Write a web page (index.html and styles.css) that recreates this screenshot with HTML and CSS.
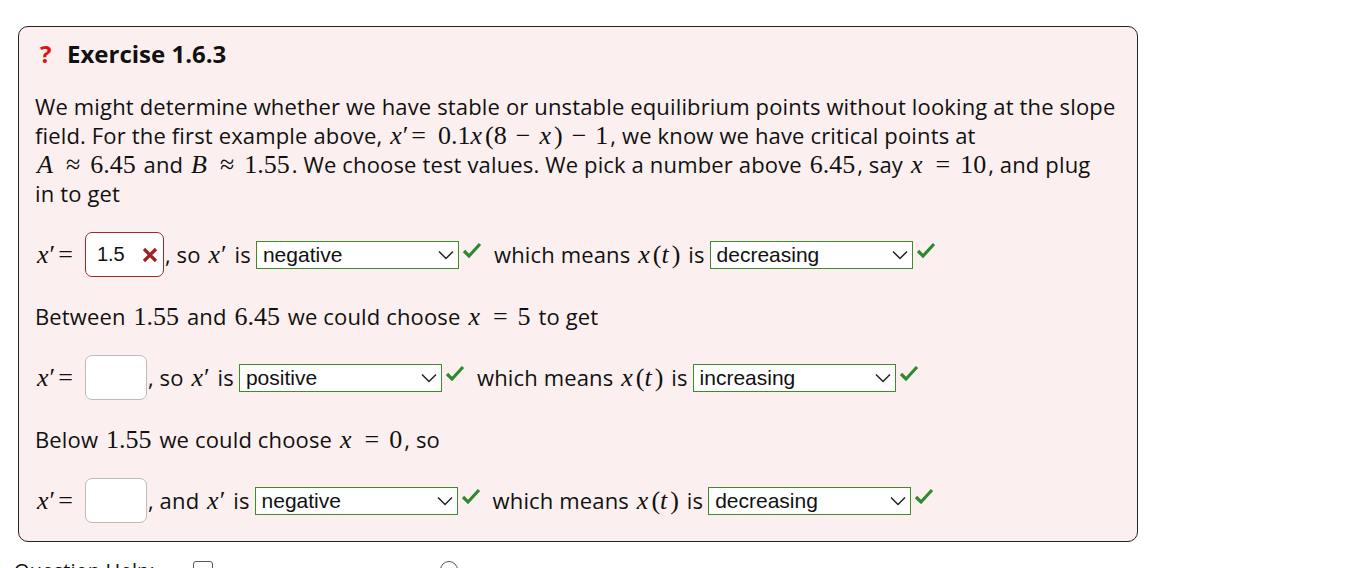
FILE: index.html
```html
<!DOCTYPE html>
<html>
<head>
<meta charset="utf-8">
<link rel="stylesheet" href="styles.css">
</head>
<body>
<div class="card">
  <div class="title"><span class="qmark">?</span><span class="ttl">Exercise 1.6.3</span></div>
  <p class="para">We might determine whether we have stable or unstable equilibrium points without looking at the slope<br>field. For the first example above, <span class="m"><i>x</i><span class="pr">′</span><span class="eq">=</span><span class="sp"></span>0.1<i>x</i>(8<span class="bin">−</span><i>x</i>)<span class="bin">−</span>1</span>, we know we have critical points at<br><span class="m"><i>A</i><span class="rel">≈</span>6.45</span> and <span class="m"><i>B</i><span class="rel">≈</span>1.55</span>. We choose test values. We pick a number above <span class="m">6.45</span>, say <span class="m"><i>x</i><span class="rel">=</span>10</span>, and plug<br>in to get</p>

  <div class="row">
    <span class="m lhs"><i>x</i><span class="pr">′</span><span class="eq">=</span></span>
    <span class="ans wrong">1.5<svg class="xmark" width="18" height="18" viewBox="0 0 18 18"><path d="M3 3 L15 15 M15 3 L3 15" stroke="#a32020" stroke-width="3.2"/></svg></span>
    <span class="txt">, so <span class="m"><i>x</i><span class="pr">′</span></span> is</span>
    <span class="sel">negative<svg class="chev" width="16" height="10" viewBox="0 0 16 10"><path d="M1 1.5 L8 8.5 L15 1.5" fill="none" stroke="#222" stroke-width="1.5"/></svg></span>
    <svg class="check" width="20" height="18" viewBox="0 0 20 18"><path d="M2 9 L7 14 L18 2" fill="none" stroke="#2f8a2f" stroke-width="3.2"/></svg>
    <span class="txt wm">which means <span class="m"><i>x</i>(<i>t</i>)</span> is</span>
    <span class="sel">decreasing<svg class="chev" width="16" height="10" viewBox="0 0 16 10"><path d="M1 1.5 L8 8.5 L15 1.5" fill="none" stroke="#222" stroke-width="1.5"/></svg></span>
    <svg class="check" width="20" height="18" viewBox="0 0 20 18"><path d="M2 9 L7 14 L18 2" fill="none" stroke="#2f8a2f" stroke-width="3.2"/></svg>
  </div>

  <p class="line">Between <span class="m">1.55</span> and <span class="m">6.45</span> we could choose <span class="m"><i>x</i><span class="rel">=</span>5</span> to get</p>

  <div class="row">
    <span class="m lhs"><i>x</i><span class="pr">′</span><span class="eq">=</span></span>
    <span class="ans empty"></span>
    <span class="txt">, so <span class="m"><i>x</i><span class="pr">′</span></span> is</span>
    <span class="sel">positive<svg class="chev" width="16" height="10" viewBox="0 0 16 10"><path d="M1 1.5 L8 8.5 L15 1.5" fill="none" stroke="#222" stroke-width="1.5"/></svg></span>
    <svg class="check" width="20" height="18" viewBox="0 0 20 18"><path d="M2 9 L7 14 L18 2" fill="none" stroke="#2f8a2f" stroke-width="3.2"/></svg>
    <span class="txt wm">which means <span class="m"><i>x</i>(<i>t</i>)</span> is</span>
    <span class="sel">increasing<svg class="chev" width="16" height="10" viewBox="0 0 16 10"><path d="M1 1.5 L8 8.5 L15 1.5" fill="none" stroke="#222" stroke-width="1.5"/></svg></span>
    <svg class="check" width="20" height="18" viewBox="0 0 20 18"><path d="M2 9 L7 14 L18 2" fill="none" stroke="#2f8a2f" stroke-width="3.2"/></svg>
  </div>

  <p class="line">Below <span class="m">1.55</span> we could choose <span class="m"><i>x</i><span class="rel">=</span>0</span>, so</p>

  <div class="row">
    <span class="m lhs"><i>x</i><span class="pr">′</span><span class="eq">=</span></span>
    <span class="ans empty"></span>
    <span class="txt">, and <span class="m"><i>x</i><span class="pr">′</span></span> is</span>
    <span class="sel">negative<svg class="chev" width="16" height="10" viewBox="0 0 16 10"><path d="M1 1.5 L8 8.5 L15 1.5" fill="none" stroke="#222" stroke-width="1.5"/></svg></span>
    <svg class="check" width="20" height="18" viewBox="0 0 20 18"><path d="M2 9 L7 14 L18 2" fill="none" stroke="#2f8a2f" stroke-width="3.2"/></svg>
    <span class="txt wm">which means <span class="m"><i>x</i>(<i>t</i>)</span> is</span>
    <span class="sel">decreasing<svg class="chev" width="16" height="10" viewBox="0 0 16 10"><path d="M1 1.5 L8 8.5 L15 1.5" fill="none" stroke="#222" stroke-width="1.5"/></svg></span>
    <svg class="check" width="20" height="18" viewBox="0 0 20 18"><path d="M2 9 L7 14 L18 2" fill="none" stroke="#2f8a2f" stroke-width="3.2"/></svg>
  </div>
</div>
<div class="footer">
  <span class="help">Question Help:</span><span class="cb"></span><span class="gap"></span><span class="rb"></span>
</div>
</body>
</html>
```

FILE: styles.css
```css
html, body {
  margin: 0;
  padding: 0;
  background: #fff;
}
body {
  font-family: "Open Sans", sans-serif;
  font-size: 22px;
  letter-spacing: 0.15px;
  color: #111;
  overflow: hidden;
  height: 568px;
}
.card {
  margin: 26px 0 0 18px;
  width: 1086px;
  padding: 12px 16px 18px 16px;
  border: 1px solid #222;
  border-radius: 10px;
  background: #fbf0ef;
}
.title {
  display: flex;
  align-items: center;
  height: 28px;
  font-weight: bold;
  font-size: 24px;
  letter-spacing: 0;
  padding-left: 5px;
}
.qmark {
  color: #e01010;
  width: 27px;
}
.para {
  margin: 25px 0 0 0;
  line-height: 29px;
}
.line {
  margin: 25px 0 0 0;
  line-height: 29px;
  height: 29px;
}
.m {
  font-family: "Liberation Serif", "DejaVu Serif", serif;
  font-size: 26px;
  letter-spacing: 0;
  padding: 0 2px;
}
.m i {
  font-style: italic;
  margin-right: 3px;
}
.pr {
  margin-left: -2px;
}
.eq {
  margin: 0 3px 0 3px;
}
.sp {
  display: inline-block;
  width: 9px;
}
.rel {
  margin: 0 10px;
}
.bin {
  margin: 0 9px;
}
.row {
  display: flex;
  align-items: center;
  height: 45px;
  margin-top: 24px;
}
.lhs {
  margin-right: 7px;
}
.ans {
  display: flex;
  align-items: center;
  box-sizing: border-box;
  height: 45px;
  background: #fff;
  border: 1px solid #bbb;
  border-radius: 7px;
  flex: none;
}
.ans.wrong {
  width: 79px;
  border-color: #9a2a2a;
  padding-left: 11px;
  padding-right: 4px;
  font-family: "Liberation Sans", Arial, sans-serif;
  font-size: 20px;
  letter-spacing: 0;
  justify-content: space-between;
}
.ans.empty {
  width: 62px;
}
.txt {
  margin-left: 1px;
  margin-right: 5px;
  white-space: nowrap;
}
.wm {
  margin-left: 12px;
}
.sel {
  display: flex;
  align-items: center;
  justify-content: space-between;
  box-sizing: border-box;
  flex: none;
  width: 203px;
  height: 28px;
  padding: 0 4px 0 6px;
  background: #fff;
  border: 1px solid #3c8c2c;
  font-family: "Liberation Sans", Arial, sans-serif;
  font-size: 21px;
  letter-spacing: 0;
  color: #111;
}
.chev {
  display: block;
}
.check {
  display: block;
  flex: none;
  margin-left: 3px;
  margin-top: -8px;
}
.footer {
  display: flex;
  align-items: flex-start;
  margin: 17px 0 0 14px;
  font-size: 20px;
  line-height: 24px;
}
.help {
  width: 179px;
  white-space: nowrap;
}
.cb {
  display: inline-block;
  width: 18px;
  height: 18px;
  border: 1px solid #555;
  border-radius: 3px;
  margin-top: 2px;
}
.gap {
  width: 227px;
}
.rb {
  display: inline-block;
  width: 16px;
  height: 16px;
  border: 1px solid #555;
  border-radius: 50%;
  margin-top: 2px;
}
```
